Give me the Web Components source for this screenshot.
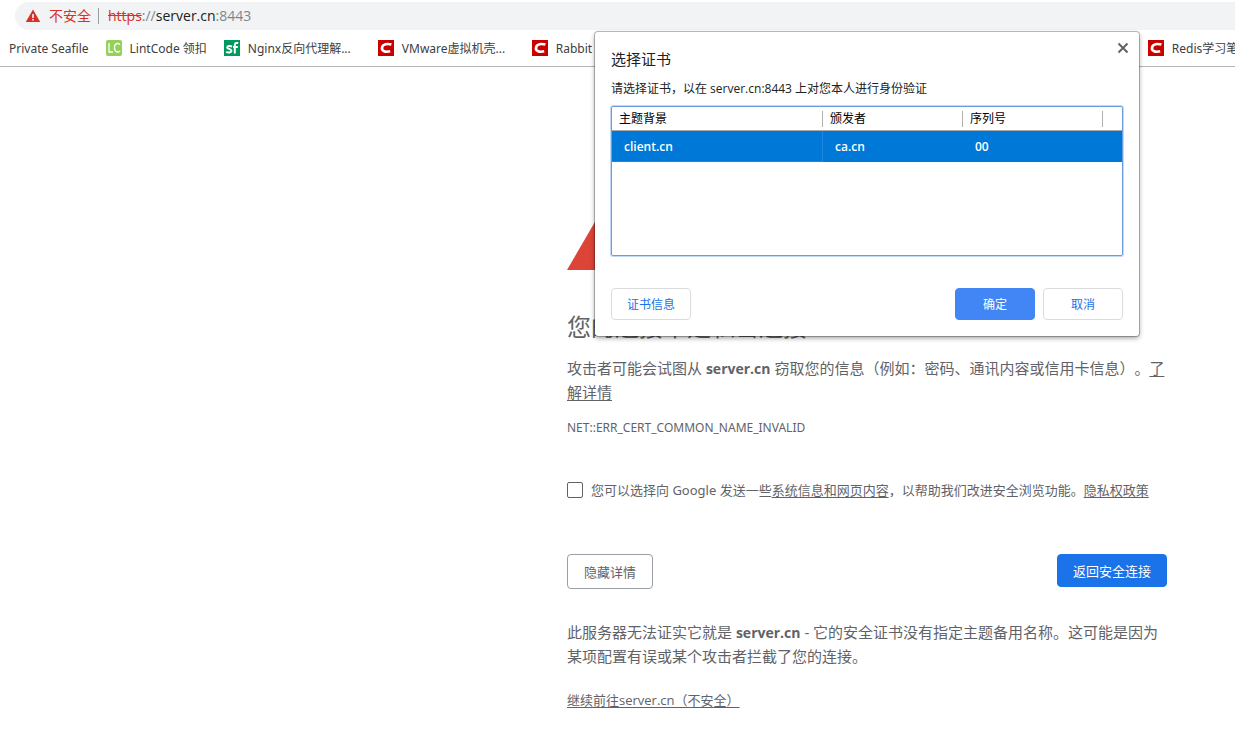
<!DOCTYPE html>
<html lang="zh-CN">
<head>
<meta charset="utf-8">
<title>隐私设置错误</title>
<style>
  body {
    margin: 0;
    background: #fff;
    font-family: "Open Sans", "Noto Sans CJK SC", sans-serif;
    text-spacing-trim: space-all;
    overflow: hidden;
  }

  .stage {
    position: relative;
    min-height: 100vh;
  }

  .columns {
    display: grid;
    grid-template-columns: 567fr 600px 68fr;
  }

  .columns > * {
    grid-column: 2;
  }

  .overlay {
    position: absolute;
    top: 32px;
    left: 0;
    right: 0;
  }
</style>
</head>
<body>
<div class="stage">
  <browser-toolbar>
    <bookmark-item slot="bookmarks" icon="none">Private Seafile</bookmark-item>
    <bookmark-item slot="bookmarks" icon="lc">LintCode 领扣</bookmark-item>
    <bookmark-item slot="bookmarks" icon="sf" wide>Nginx反向代理解...</bookmark-item>
    <bookmark-item slot="bookmarks" icon="c" wide>VMware虚拟机壳...</bookmark-item>
    <bookmark-item slot="bookmarks" icon="c" wide>Rabbit</bookmark-item>
    <bookmark-gap slot="bookmarks"></bookmark-gap>
    <bookmark-item slot="bookmarks" icon="c" wide>Redis学习笔</bookmark-item>
  </browser-toolbar>

  <main class="columns">
    <ssl-warning>
      <span slot="heading">您的连接不是私密连接</span>
      <span slot="code">NET::ERR_CERT_COMMON_NAME_INVALID</span>
    </ssl-warning>
  </main>

  <div class="columns overlay">
    <cert-dialog>
      <span slot="title">选择证书</span>
      <span slot="message">请选择证书，以在 server.cn:8443 上对您本人进行身份验证</span>
    </cert-dialog>
  </div>
</div>

<script>
(function () {
  const ICONS = {
    none: "",
    lc: `
      <svg width="16" height="16" viewBox="0 0 16 16" aria-hidden="true">
        <rect width="16" height="16" rx="2" fill="#94d05a"/>
        <path d="M3 3v9h4" fill="none" stroke="#fff" stroke-width="1.3"/>
        <path d="M14 4.6C12.6 2.9 8.6 2.8 8.4 7.6c0 4.9 4.1 5.2 5.7 3.2" fill="none" stroke="#fff" stroke-width="1.3"/>
      </svg>`,
    sf: `
      <svg width="16" height="16" viewBox="0 0 16 16" aria-hidden="true">
        <rect width="16" height="16" fill="#009a61"/>
        <path d="M8 6.6C6.4 5.7 3.2 5.6 3.2 7.4c0 1.8 4.2 1.2 4.2 3.4 0 2-3.4 2-5.2 1" fill="none" stroke="#fff" stroke-width="2"/>
        <path d="M10.8 13.6V5.2c0-2 1.2-2.6 3.4-2.2M9 7h4.8" fill="none" stroke="#fff" stroke-width="2"/>
      </svg>`,
    c: `
      <svg width="16" height="16" viewBox="0 0 16 16" aria-hidden="true">
        <rect width="16" height="16" fill="#c90000"/>
        <path d="M13.4 4.6C9.5 3.4 4.8 4 4 7.6c-.7 3.7 3.5 4.8 8.2 3.7" fill="none" stroke="#fff" stroke-width="2.6"/>
      </svg>`,
  };

  class BookmarkItem extends HTMLElement {
    constructor() {
      super();
      this.attachShadow({ mode: "open" });
    }

    connectedCallback() {
      this.shadowRoot.innerHTML = `
        <style>
          :host {
            display: block;
            flex: none;
            font-family: "Noto Sans", "Noto Sans CJK SC", sans-serif;
          }

          :host([wide]) {
            width: 137px;
          }

          a {
            display: flex;
            align-items: center;
            gap: 8px;
            color: #3c4043;
            font-size: 12px;
            line-height: 16px;
            white-space: nowrap;
            text-decoration: none;
          }

          a span {
            padding-top: 2px;
          }

          svg {
            flex: none;
          }
        </style>
        <a href="#">${ICONS[this.getAttribute("icon")] || ""}<span><slot></slot></span></a>
      `;
    }
  }

  /* keeps three bookmark slots free */
  class BookmarkGap extends HTMLElement {
    constructor() {
      super();
      this.attachShadow({ mode: "open" });
      this.shadowRoot.innerHTML = `
        <style>
          :host {
            display: block;
            flex: none;
            width: 445px;
          }
        </style>
      `;
    }
  }

  class BrowserToolbar extends HTMLElement {
    constructor() {
      super();
      this.attachShadow({ mode: "open" });
      this.shadowRoot.innerHTML = `
        <style>
          :host {
            display: block;
            padding-top: 2px;
            border-bottom: 1px solid #b4b4b4;
          }

          .omnibox {
            display: flex;
            align-items: center;
            height: 28px;
            margin-left: 15px;
            padding-left: 10px;
            border-radius: 14px 0 0 14px;
            background: #f1f3f4;
            font-size: 14px;
            line-height: 20px;
            color: #80868b;
          }

          .status {
            display: flex;
            align-items: center;
            gap: 8px;
            padding-right: 7px;
            color: #d93025;
          }

          .url {
            border-left: 1px solid #9aa0a6;
            padding-left: 9px;
            line-height: 16px;
          }

          .scheme {
            color: #d93025;
            text-decoration: line-through;
          }

          .host {
            color: #202124;
          }

          .bookmarks {
            display: flex;
            align-items: center;
            gap: 17px;
            height: 36px;
            padding-left: 9px;
            overflow: hidden;
          }
        </style>

        <div class="omnibox">
          <div class="status">
            <svg width="16" height="16" viewBox="0 0 16 16" aria-hidden="true">
              <path d="M8 1.4 15.2 14H.8Z" fill="#d93025"/>
              <path d="M7.2 6h1.6v4H7.2zM7.2 11h1.6v1.6H7.2z" fill="#fff"/>
            </svg>
            <span>不安全</span>
          </div>
          <div class="url"><span class="scheme">https</span>://<span class="host">server.cn</span>:8443</div>
        </div>
        <nav class="bookmarks"><slot name="bookmarks"></slot></nav>
      `;
    }
  }

  class ActionButton extends HTMLElement {
    constructor() {
      super();
      this.attachShadow({ mode: "open" });
      this.shadowRoot.innerHTML = `
        <style>
          :host {
            display: block;
          }

          button {
            display: block;
            box-sizing: border-box;
            min-width: 80px;
            height: 32px;
            padding: 1px 15px 0;
            border: 1px solid #dadce0;
            border-radius: 4px;
            background: #fff;
            color: #1a73e8;
            font: inherit;
            font-size: 12px;
          }

          :host([kind="confirm"]) button {
            border-color: #4285f4;
            background: #4285f4;
            color: #fff;
          }

          :host([kind="page"]) button {
            height: 35px;
            padding: 0 16px;
            border-color: #9aa0a6;
            color: #5f6368;
            font-size: 13px;
          }

          :host([kind="primary"]) button {
            height: 33px;
            padding: 0 15px;
            border-color: #1a73e8;
            background: #1a73e8;
            color: #fff;
            font-size: 13px;
          }
        </style>
        <button type="button"><slot></slot></button>
      `;
    }
  }

  class SslWarning extends HTMLElement {
    constructor() {
      super();
      this.attachShadow({ mode: "open" });
      this.shadowRoot.innerHTML = `
        <style>
          :host {
            display: block;
            padding-top: 131px;
            color: #5f6368;
            font-size: 15px;
            line-height: 24px;
          }

          .icon {
            display: block;
          }

          h1 {
            margin: 43px 0 15px;
            font-size: 24px;
            font-weight: 400;
            line-height: 28px;
          }

          p {
            margin: 0;
          }

          b {
            font-size: 14px;
            line-height: 16px;
          }

          a {
            color: inherit;
            text-underline-offset: 2px;
          }

          .small {
            font-size: 13px;
            line-height: 20px;
          }

          .code {
            margin-top: 14px;
            font-family: "Noto Sans", sans-serif;
            font-size: 12px;
          }

          .opt-in {
            display: flex;
            align-items: center;
            gap: 8px;
            margin-top: 42px;
            font-family: "Noto Sans", "Noto Sans CJK SC", sans-serif;
            white-space: nowrap;
          }

          input {
            appearance: none;
            box-sizing: border-box;
            flex: none;
            width: 16px;
            height: 16px;
            margin: 0;
            border: 1px solid #5f6368;
            border-radius: 2px;
            background: #fff;
          }

          .actions {
            display: flex;
            justify-content: space-between;
            align-items: flex-start;
            margin: 54px 0 31px;
          }

          .proceed {
            margin-top: 22px;
          }
        </style>

        <svg class="icon" width="72" height="72" viewBox="0 0 72 72" aria-hidden="true">
          <path d="M0 72 36 10l36 62Z" fill="#db4437"/>
          <path d="M33 33h6v18h-6zM33 57h6v6h-6z" fill="#fff"/>
        </svg>

        <h1><slot name="heading"></slot></h1>
        <p>攻击者可能会试图从 <b>server.cn</b> 窃取您的信息（例如：密码、通讯内容或信用卡信息）。<a href="#">了解详情</a></p>
        <p class="small code"><slot name="code"></slot></p>

        <div class="small opt-in">
          <input type="checkbox" id="reporting">
          <label for="reporting">您可以选择向 Google 发送一些<a href="#">系统信息和网页内容</a>，以帮助我们改进安全浏览功能。<a href="#">隐私权政策</a></label>
        </div>

        <div class="actions">
          <action-button kind="page">隐藏详情</action-button>
          <action-button kind="primary">返回安全连接</action-button>
        </div>

        <p>此服务器无法证实它就是 <b>server.cn</b> - 它的安全证书没有指定主题备用名称。这可能是因为某项配置有误或某个攻击者拦截了您的连接。</p>
        <p class="small proceed"><a href="#">继续前往server.cn（不安全）</a></p>
      `;
    }
  }

  class CertDialog extends HTMLElement {
    constructor() {
      super();
      this.attachShadow({ mode: "open" });

      this._columns = ["主题背景", "颁发者", "序列号"];
      this._rows = [["client.cn", "ca.cn", "00"]];
    }

    connectedCallback() {
      this.render();
    }

    render() {
      const head = this._columns
        .map((name) => `<th scope="col"><span>${name}</span></th>`)
        .join("");

      const rows = this._rows
        .map((row) => {
          const cells = row.map((value) => `<td>${value}</td>`).join("");
          return `<tr>${cells}<td></td></tr>`;
        })
        .join("");

      this.shadowRoot.innerHTML = `
        <style>
          :host {
            display: block;
            position: relative;
            box-sizing: border-box;
            margin: 0 28px;
            padding: 16px;
            border-radius: 3px;
            background: #fff;
            box-shadow: 0 0 0 1px rgba(0, 0, 0, 0.24), 0 2px 5px rgba(0, 0, 0, 0.4);
            color: #202124;
            font-size: 12px;
            line-height: 16px;
          }

          h2 {
            margin: 0 0 11px;
            font-size: 15px;
            font-weight: 400;
            line-height: 22px;
          }

          p {
            margin: 0 0 9px;
          }

          .close {
            position: absolute;
            top: 8px;
            right: 8px;
            display: grid;
            place-items: center;
            width: 16px;
            height: 16px;
            padding: 0;
            border: 0;
            background: none;
          }

          .list {
            box-sizing: border-box;
            height: 150px;
            border: 1px solid #6b9be0;
            border-radius: 2px;
            box-shadow: 0 0 0 1px #c3d7f7;
          }

          table {
            width: 100%;
            table-layout: fixed;
            border-collapse: collapse;
          }

          th {
            height: 23px;
            padding: 0;
            border-bottom: 1px solid #a8a8a8;
            color: #000;
            font-weight: 400;
            text-align: left;
          }

          th span {
            display: block;
            padding-left: 7px;
            border-right: 1px solid #b0b0b0;
          }

          td {
            height: 31px;
            padding: 0 0 0 12px;
            background: #0078d7;
            color: #fff;
            font-weight: 600;
          }

          td:first-child {
            box-shadow: inset -1px -1px #1f86e2;
          }

          .buttons {
            display: flex;
            gap: 8px;
            margin-top: 32px;
          }

          .buttons :first-child {
            margin-right: auto;
          }
        </style>

        <button class="close" type="button" aria-label="关闭">
          <svg width="12" height="12" viewBox="0 0 12 12" aria-hidden="true">
            <path d="m1.5 1.5 9 9m0-9-9 9" stroke="#5f6368" stroke-width="2"/>
          </svg>
        </button>

        <h2><slot name="title"></slot></h2>
        <p><slot name="message"></slot></p>

        <div class="list">
          <table>
            <colgroup>
              <col style="width:211px">
              <col style="width:140px">
              <col style="width:140px">
              <col>
            </colgroup>
            <thead><tr>${head}<th></th></tr></thead>
            <tbody>${rows}</tbody>
          </table>
        </div>

        <div class="buttons">
          <action-button>证书信息</action-button>
          <action-button kind="confirm">确定</action-button>
          <action-button>取消</action-button>
        </div>
      `;
    }
  }

  customElements.define("bookmark-item", BookmarkItem);
  customElements.define("bookmark-gap", BookmarkGap);
  customElements.define("browser-toolbar", BrowserToolbar);
  customElements.define("action-button", ActionButton);
  customElements.define("ssl-warning", SslWarning);
  customElements.define("cert-dialog", CertDialog);
})();
</script>
</body>
</html>
